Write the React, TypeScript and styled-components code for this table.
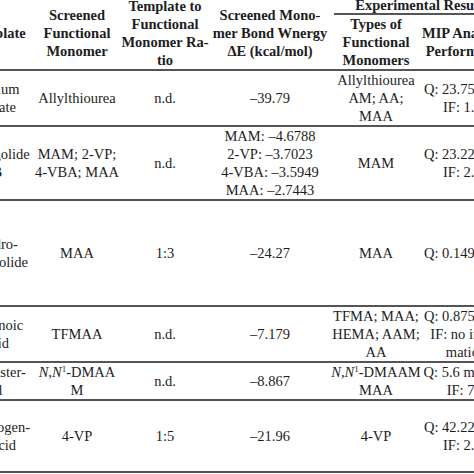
import styled, { createGlobalStyle } from 'styled-components';

const GlobalStyle = createGlobalStyle`
  html, body {
    margin: 0;
    padding: 0;
    background: #ffffff;
  }
`;

type Line = string | JSX.Element;

type Entry = {
  template: Line[];
  monomer: Line[];
  ratio: Line[];
  energy: Line[];
  types: Line[];
  performance: Line[];
  height?: number;
};

const Dmaam = ({ tail }: { tail: string }) => (
  <span>
    <i>N</i>,<i>N</i>
    <Sup>1</Sup>-{tail}
  </span>
);

const entries: Entry[] = [
  {
    template: ['Sodium', 'Oleate'],
    monomer: ['Allylthiourea'],
    ratio: ['n.d.'],
    energy: ['–39.79'],
    types: ['Allylthiourea', 'AM; AA;', 'MAA'],
    performance: ['Q: 23.75 mg/g', 'IF: 1.62'],
  },
  {
    template: ['Ginkgolide', <b key="b">B</b>],
    monomer: ['MAM; 2-VP;', '4-VBA; MAA'],
    ratio: ['n.d.'],
    energy: ['MAM: –4.6788', '2-VP: –3.7023', '4-VBA: –3.5949', 'MAA: –2.7443'],
    types: ['MAM'],
    performance: ['Q: 23.22 mg/g', 'IF: 2.91'],
  },
  {
    template: ['Andro-', 'grapholide'],
    monomer: ['MAA'],
    ratio: ['1:3'],
    energy: ['–24.27'],
    types: ['MAA'],
    performance: ['Q: 0.149 mg/g'],
    height: 106,
  },
  {
    template: ['Octanoic', 'acid'],
    monomer: ['TFMAA'],
    ratio: ['n.d.'],
    energy: ['–7.179'],
    types: ['TFMA; MAA;', 'HEMA; AAM;', 'AA'],
    performance: ['Q: 0.875 mg/g', 'IF: no infor-', 'mation'],
  },
  {
    template: ['Castaster-', 'ol'],
    monomer: [<Dmaam key="d" tail="DMAA" />, 'M'],
    ratio: ['n.d.'],
    energy: ['–8.867'],
    types: [<Dmaam key="d" tail="DMAAM" />, 'MAA'],
    performance: ['Q: 5.6 mmol/g', 'IF: 7.5'],
  },
  {
    template: ['Chlorogen-', 'ic acid'],
    monomer: ['4-VP'],
    ratio: ['1:5'],
    energy: ['–21.96'],
    types: ['4-VP'],
    performance: ['Q: 42.22 mg/g', 'IF: 2.53'],
    height: 72,
  },
];

const columnWidths = [74, 86, 90, 120, 92, 88];

const Lines = ({ items }: { items: Line[] }) => (
  <>
    {items.map((item, i) => (
      <TextLine key={i}>{item}</TextLine>
    ))}
  </>
);

const App = () => {
  return (
    <>
      <GlobalStyle />
      <Frame>
        <Table>
          <colgroup>
            {columnWidths.map((w, i) => (
              <Col key={i} $width={w} />
            ))}
          </colgroup>
          <THead>
            <tr>
              <Th rowSpan={2}>Template</Th>
              <Th rowSpan={2}>
                <Lines items={['Screened', 'Functional', 'Monomer']} />
              </Th>
              <Th rowSpan={2}>
                <Lines items={['Template to', 'Functional', 'Monomer Ra-', 'tio']} />
              </Th>
              <Th rowSpan={2}>
                <Lines items={['Screened Mono-', 'mer Bond Wnergy', 'ΔE (kcal/mol)']} />
              </Th>
              <GroupHead colSpan={2}>
                <GroupLabel>Experimental Results</GroupLabel>
              </GroupHead>
            </tr>
            <tr>
              <Th>
                <Lines items={['Types of', 'Functional', 'Monomers']} />
              </Th>
              <Th>
                <Lines items={['MIP Analytical', 'Performance']} />
              </Th>
            </tr>
          </THead>
          <tbody>
            {entries.map((entry, i) => (
              <Row key={i} $height={entry.height}>
                <Td>
                  <Lines items={entry.template} />
                </Td>
                <Td>
                  <Lines items={entry.monomer} />
                </Td>
                <Td>
                  <Lines items={entry.ratio} />
                </Td>
                <Td>
                  <Lines items={entry.energy} />
                </Td>
                <Td>
                  <Lines items={entry.types} />
                </Td>
                <Td>
                  <Lines items={entry.performance} />
                </Td>
              </Row>
            ))}
          </tbody>
        </Table>
      </Frame>
    </>
  );
};

const Frame = styled.div`
  width: 474px;
  height: 474px;
  overflow: hidden;
  background: #ffffff;
  color: #1d1d1d;
  font-family: 'Liberation Serif', 'Times New Roman', serif;
  font-size: 14.5px;
`;

const Table = styled.table`
  border-collapse: collapse;
  table-layout: fixed;
  width: 550px;
  margin: -3px 0 0 -40px;
`;

const Col = styled.col<{ $width: number }>`
  width: ${(p) => p.$width}px;
`;

const THead = styled.thead`
  border-bottom: 2px solid #555555;
`;

const Th = styled.th`
  padding: 0;
  font-weight: 700;
  line-height: 18px;
  text-align: center;
  vertical-align: middle;
  white-space: nowrap;
`;

const GroupHead = styled.th`
  padding: 0;
  font-weight: 700;
  text-align: center;
  vertical-align: top;
  white-space: nowrap;
`;

const GroupLabel = styled.div`
  line-height: 16px;
  margin-left: 4px;
  border-bottom: 2px solid #555555;
`;

const Row = styled.tr<{ $height?: number }>`
  border-bottom: 2px solid #555555;
  height: ${(p) => (p.$height ? `${p.$height}px` : 'auto')};
`;

const Td = styled.td`
  padding: 0;
  line-height: 18px;
  text-align: center;
  vertical-align: middle;
  white-space: nowrap;
`;

const TextLine = styled.div`
  display: block;
`;

const Sup = styled.sup`
  font-size: 9px;
  line-height: 0;
  vertical-align: 5px;
`;

export default App;
